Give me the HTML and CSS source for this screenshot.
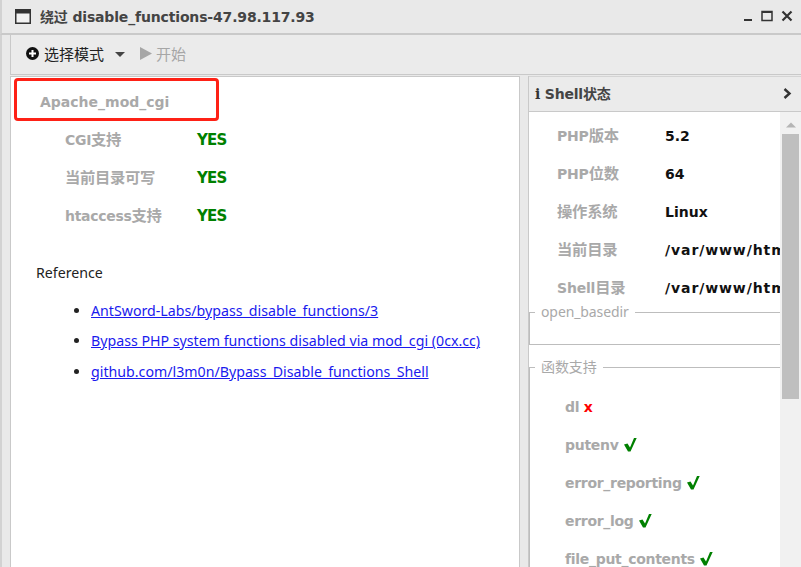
FILE: index.html
```html
<!DOCTYPE html>
<html lang="zh">
<head>
<meta charset="utf-8">
<title>绕过 disable_functions</title>
<link rel="stylesheet" href="styles.css">
</head>
<body>
<div class="window">
  <header class="titlebar">
    <svg class="win-icon" width="16" height="16" viewBox="0 0 16 16"><path d="M0 1h16v15H0z" fill="#333"/><path d="M1.500 5.500h13v9h-13z" fill="#f2f2f2"/></svg>
    <span class="title-text">绕过 disable_functions-47.98.117.93</span>
    <div class="win-controls">
      <svg width="10" height="12" viewBox="0 0 10 12"><path d="M1 9h8v2H1z" fill="#333"/></svg>
      <svg width="12" height="12" viewBox="0 0 12 12"><path d="M1 1.500h10v9H1z" fill="none" stroke="#333" stroke-width="1.500"/><path d="M1 2h10" stroke="#333" stroke-width="2"/></svg>
      <svg width="12" height="12" viewBox="0 0 12 12"><path d="M1.500 1.500l9 9M10.500 1.500l-9 9" stroke="#333" stroke-width="2.200"/></svg>
    </div>
  </header>
  <div class="body">
    <div class="toolbar">
      <svg class="plus" width="13" height="13" viewBox="0 0 13 13"><circle cx="6.500" cy="6.500" r="6.500" fill="#111"/><path d="M6.500 3v7M3 6.500h7" stroke="#fff" stroke-width="2"/></svg>
      <span class="tool-label">选择模式</span>
      <svg class="caret" width="10" height="5" viewBox="0 0 10 5"><path d="M0 0h10L5 5z" fill="#444"/></svg>
      <svg class="play" width="12" height="13" viewBox="0 0 12 13"><path d="M0 0l12 6.500L0 13z" fill="#a6a6a6"/></svg>
      <span class="tool-label disabled">开始</span>
    </div>
    <div class="panels">
      <main class="left">
        <h2 class="mode">Apache_mod_cgi</h2>
        <dl class="checks">
          <div class="check"><dt>CGI<span class="zh">支持</span></dt><dd>YES</dd></div>
          <div class="check"><dt><span class="zh">当前目录可写</span></dt><dd>YES</dd></div>
          <div class="check"><dt>htaccess<span class="zh">支持</span></dt><dd>YES</dd></div>
        </dl>
        <p class="ref-title">Reference</p>
        <ul class="refs">
          <li><a href="#">AntSword-Labs/bypass_disable_functions/3</a></li>
          <li><a href="#">Bypass PHP system functions disabled via mod_cgi (0cx.cc)</a></li>
          <li><a href="#">github.com/l3m0n/Bypass_Disable_functions_Shell</a></li>
        </ul>
        <div class="highlight"></div>
      </main>
      <aside class="right">
        <div class="side-head">
          <span class="side-title"><b class="info">i</b> Shell状态</span>
          <svg width="9" height="11" viewBox="0 0 9 11"><path d="M1.500 1l5 4.500-5 4.500" fill="none" stroke="#333" stroke-width="2.400"/></svg>
        </div>
        <div class="side-scroll">
          <div class="side-content">
            <dl class="status">
              <div class="stat"><dt>PHP<span class="zh">版本</span></dt><dd>5.2</dd></div>
              <div class="stat"><dt>PHP<span class="zh">位数</span></dt><dd>64</dd></div>
              <div class="stat"><dt><span class="zh">操作系统</span></dt><dd>Linux</dd></div>
              <div class="stat"><dt><span class="zh">当前目录</span></dt><dd class="path">/var/www/html</dd></div>
              <div class="stat"><dt>Shell<span class="zh">目录</span></dt><dd class="path">/var/www/html</dd></div>
            </dl>
            <fieldset class="group basedir"><legend>open_basedir</legend></fieldset>
            <fieldset class="group funcs">
              <legend>函数支持</legend>
              <div class="fn">dl <span class="no">x</span></div>
              <div class="fn">putenv <svg class="tick" width="13" height="14" viewBox="0 0 13 14"><path d="M0 6.500L3.500 5.500 6 9.500 10 0h2.700L6.500 13.500H4z" fill="#008000"/></svg></div>
              <div class="fn">error_reporting <svg class="tick" width="13" height="14" viewBox="0 0 13 14"><path d="M0 6.500L3.500 5.500 6 9.500 10 0h2.700L6.500 13.500H4z" fill="#008000"/></svg></div>
              <div class="fn">error_log <svg class="tick" width="13" height="14" viewBox="0 0 13 14"><path d="M0 6.500L3.500 5.500 6 9.500 10 0h2.700L6.500 13.500H4z" fill="#008000"/></svg></div>
              <div class="fn">file_put_contents <svg class="tick" width="13" height="14" viewBox="0 0 13 14"><path d="M0 6.500L3.500 5.500 6 9.500 10 0h2.700L6.500 13.500H4z" fill="#008000"/></svg></div>
            </fieldset>
          </div>
          <div class="scrollbar">
            <svg width="12" height="6" viewBox="0 0 12 6"><path d="M1 5.500h10L6 .5z" fill="#b5b5b5"/></svg>
            <div class="thumb"></div>
          </div>
        </div>
      </aside>
    </div>
  </div>
</div>
</body>
</html>
```
FILE: styles.css
```css
* { box-sizing: border-box; }
html, body { margin: 0; padding: 0; height: 100%; overflow: hidden; }
body {
  background: #e9e9e9;
  font-family: "Noto Sans", "Noto Sans CJK SC", sans-serif;
  font-size: 14.2px;
  color: #222;
}
.window { height: 567px; display: flex; flex-direction: column; }
.titlebar {
  height: 35px;
  flex: none;
  display: flex;
  align-items: center;
  padding: 0 0 2px 13px;
  border-bottom: 2px solid #c9c9c9;
  border-left: 2px solid #d2d2d2;
}
.win-icon { margin-right: 9px; }
.title-text {
  font-family: "DejaVu Sans", "Noto Sans CJK SC", sans-serif;
  font-weight: bold;
  font-size: 14px;
  letter-spacing: -0.16px;
  color: #444;
  flex: 1;
}
.win-controls { display: flex; gap: 8px; align-items: center; padding-right: 8px; }
.body { flex: 1; min-height: 0; display: flex; flex-direction: column; border-left: 2px solid #d2d2d2; padding-left: 8px; }
.toolbar {
  height: 40px;
  flex: none;
  display: flex;
  align-items: center;
  padding: 0 0 2px 16px;
  background: #ebebeb;
  border: 1px solid #c9c9c9;
  border-right: none;
  border-top: none;
}
.plus { margin: 0 5px 0 -1px; }
.tool-label { font-size: 15px; color: #222; }
.tool-label.disabled { color: #a6a6a6; }
.caret { margin: 1px 15px 0 11px; }
.play { margin-right: 4px; }
.panels { flex: 1; min-height: 0; display: flex; gap: 8px; margin-top: 1px; }
.left {
  position: relative;
  width: 510px;
  flex: none;
  background: #fff;
  border: 1px solid #c9c9c9;
  border-width: 1px 1px 0 1px;
  padding: 15px 0 0 0;
  overflow: hidden;
}
.mode {
  margin: 0 0 0 29px;
  font-family: "DejaVu Sans", "Noto Sans CJK SC", sans-serif;
  font-size: 14px;
  font-weight: bold;
  color: #a9a9a9;
  line-height: 20px;
}
.checks { margin: 9px 0 0 54px; }
.check { display: flex; height: 38px; align-items: center; }
dt, dd { margin: 0; }
.zh { font-size: 15.3px; }
.check dt {
  width: 132px;
  font-family: "DejaVu Sans", "Noto Sans CJK SC", sans-serif;
  font-weight: bold;
  font-size: 14px;
  letter-spacing: -0.3px;
  color: #a9a9a9;
  line-height: 20px;
}
.check dd {
  font-family: "DejaVu Sans", sans-serif;
  font-weight: bold;
  font-size: 15px;
  letter-spacing: -0.8px;
  color: #008000;
  line-height: 20px;
}
.ref-title { margin: 28px 0 0 25px; line-height: 20px; color: #222; }
.refs { margin: 17.750px 0 0 0; padding: 0 0 0 80px; list-style: disc; }
.refs li { height: 30.500px; line-height: 20px; }
.refs a { color: #1a1aee; text-decoration: underline; }
.highlight {
  position: absolute;
  left: 3px;
  top: 1px;
  width: 205px;
  height: 43px;
  border: 3px solid #fe2116;
  border-radius: 4px;
}
.right {
  flex: 1;
  min-width: 0;
  display: flex;
  flex-direction: column;
  border-left: 1px solid #c9c9c9;
}
.side-head {
  height: 36px;
  flex: none;
  display: flex;
  align-items: center;
  justify-content: space-between;
  padding: 0 9px 2px 6px;
  background: #ebebeb;
  border-top: 1px solid #d4d4d4;
  border-bottom: 1px solid #c9c9c9;
}
.side-title {
  font-family: "DejaVu Sans", "Noto Sans CJK SC", sans-serif;
  font-weight: bold;
  font-size: 14px;
  letter-spacing: -0.2px;
  color: #444;
}
.info { font-family: "DejaVu Serif", serif; color: #333; }
.side-scroll { flex: 1; min-height: 0; display: flex; background: #fff; overflow: hidden; }
.side-content { flex: 1; min-width: 0; overflow: hidden; padding-top: 5px; }
.status { margin: 0; }
.stat { display: flex; height: 38px; align-items: center; margin-left: 28px; white-space: nowrap; }
.stat dt {
  width: 108px;
  flex: none;
  font-family: "DejaVu Sans", "Noto Sans CJK SC", sans-serif;
  font-weight: bold;
  font-size: 14px;
  letter-spacing: -0.2px;
  line-height: 20px;
  color: #a9a9a9;
}
.stat dd {
  font-family: "DejaVu Sans", sans-serif;
  font-weight: bold;
  font-size: 14px;
  line-height: 20px;
  color: #111;
}
.stat dd.path { letter-spacing: 0.9px; }
.group {
  margin: 0;
  padding: 0;
  min-width: 0;
  border: 1px solid #bdbdbd;
  border-width: 1px 0 0 1px;
}
.group legend {
  margin-left: 5px;
  padding: 0 6px;
  color: #a9a9a9;
  font-size: 14px;
  line-height: 20px;
  letter-spacing: -0.1px;
}
.basedir { height: 43px; border-bottom: 1px solid #bdbdbd; margin-top: -5px; }
.funcs { margin-top: 12px; padding: 11px 0 0 0; }
.fn {
  height: 38px;
  line-height: 38px;
  padding-left: 35px;
  font-family: "DejaVu Sans", sans-serif;
  font-weight: bold;
  font-size: 14px;
  letter-spacing: -0.3px;
  color: #a9a9a9;
  white-space: nowrap;
}
.no { color: #f00; }
.tick { vertical-align: -2px; margin-left: 1px; }
.scrollbar {
  width: 21px;
  flex: none;
  background: #f1f1f1;
  display: flex;
  flex-direction: column;
  align-items: center;
  padding-top: 10px;
}
.thumb { width: 17px; height: 265px; margin-top: 6px; background: #bfbfbf; }
```
